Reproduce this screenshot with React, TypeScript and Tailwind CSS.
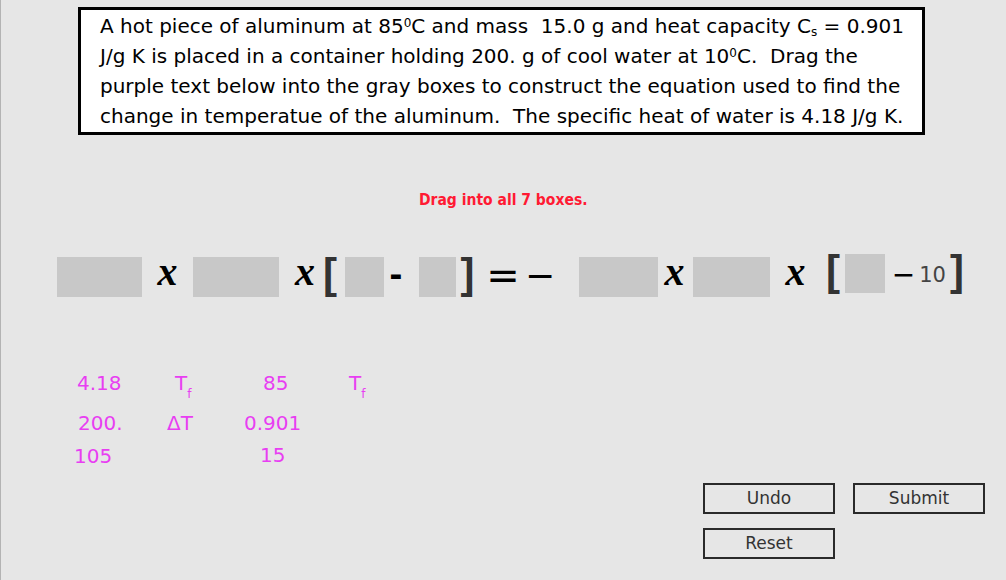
import React from "react";

function G({ cls, inner, children }: { cls: string; inner: string; children: React.ReactNode }) {
  return (
    <div className={`flex justify-center items-center shrink-0 ${cls}`}>
      <span className={`leading-none whitespace-nowrap ${inner}`}>{children}</span>
    </div>
  );
}

const X = "font-[Liberation_Serif,serif] font-bold italic text-[40px] text-black";
const BR = "font-[Liberation_Sans,sans-serif] font-bold text-[42px] text-[#333333]";

function Tf() {
  return (
    <span>
      T<sub className="text-[12px] -bottom-[8px]">f</sub>
    </span>
  );
}

function Btn({ cls, children }: { cls: string; children: React.ReactNode }) {
  return (
    <div
      className={`shrink-0 w-[132px] h-[31px] border-2 border-[#2a2a2a] flex items-center justify-center text-[17px] text-[#333333] ${cls}`}
    >
      {children}
    </div>
  );
}

export default function App() {
  return (
    <div className="w-[1006px] h-[580px] bg-[#e6e6e6] border-l border-[#b3b3b3] overflow-hidden flex flex-col font-[DejaVu_Sans,sans-serif]">
      <div className="mt-[7px] ml-[77px] w-[847px] h-[128px] shrink-0 border-[3px] border-black bg-white pl-[19px] pt-[1px] text-[20px] leading-[30px] text-black whitespace-nowrap">
        <div>
          A hot piece of aluminum at 85<sup className="text-[12px]">0</sup>C and mass{"\u00a0"} 15.0 g and heat capacity C
          <sub className="text-[12px]">s</sub> = 0.901
        </div>
        <div>
          J/g K is placed in a container holding 200. g of cool water at 10<sup className="text-[12px]">0</sup>C.{"\u00a0"} Drag the
        </div>
        <div>purple text below into the gray boxes to construct the equation used to find the</div>
        <div>change in temperatue of the aluminum.{"\u00a0"} The specific heat of water is 4.18 J/g K.</div>
      </div>

      <div className="mt-[55px] ml-[418px] h-[20px] leading-[20px] text-[15.5px] font-bold text-[#ff1a33] font-[DejaVu_Sans_Condensed,DejaVu_Sans,sans-serif] whitespace-nowrap">
        Drag into all 7 boxes.
      </div>

      <div className="mt-[44px] h-[43px] flex items-start shrink-0">
        <div className="ml-[56px] mt-[3px] w-[85px] h-[40px] bg-[#c8c8c8] shrink-0" />
        <G cls="ml-[15px] mt-[3px] w-[21px] h-[40px] pb-[10px]" inner={X}>x</G>
        <div className="ml-[15px] mt-[3px] w-[86px] h-[40px] bg-[#c8c8c8] shrink-0" />
        <G cls="ml-[16px] mt-[3px] w-[20px] h-[40px] pb-[10px]" inner={X}>x</G>
        <G cls="ml-[10px] mt-[3px] w-[10px] h-[40px] pb-[6px]" inner={BR}>[</G>
        <div className="ml-[10px] mt-[3px] w-[39px] h-[40px] bg-[#c8c8c8] shrink-0" />
        <G cls="ml-[7px] mt-[3px] w-[10px] h-[40px] pb-[5px]" inner="font-bold text-[32px] text-black">-</G>
        <div className="ml-[18px] mt-[3px] w-[37px] h-[40px] bg-[#c8c8c8] shrink-0" />
        <G cls="ml-[6px] mt-[3px] w-[11px] h-[40px] pb-[6px]" inner={BR}>]</G>
        <G cls="ml-[16px] mt-[3px] w-[28px] h-[40px] pb-[4px]" inner="text-[40px] text-black">=</G>
        <G cls="ml-[11px] mt-[3px] w-[24px] h-[40px] pb-[3px]" inner="text-[36px] text-black">{"\u2212"}</G>
        <div className="ml-[27px] mt-[3px] w-[79px] h-[40px] bg-[#c8c8c8] shrink-0" />
        <G cls="ml-[6px] mt-[3px] w-[21px] h-[40px] pb-[10px]" inner={X}>x</G>
        <div className="ml-[8px] mt-[3px] w-[77px] h-[40px] bg-[#c8c8c8] shrink-0" />
        <G cls="ml-[15px] mt-[3px] w-[21px] h-[40px] pb-[10px]" inner={X}>x</G>
        <G cls="ml-[22px] mt-[0px] w-[10px] h-[39px] pb-[6px]" inner={BR}>[</G>
        <div className="ml-[7px] mt-[0px] w-[40px] h-[39px] bg-[#c8c8c8] shrink-0" />
        <G cls="ml-[9px] mt-[3px] w-[19px] h-[40px] pb-[4px]" inner="text-[28px] text-black">{"\u2212"}</G>
        <G cls="ml-[7px] mt-[3px] w-[25px] h-[40px] pb-[4px]" inner="text-[21px] text-[#444444]">10</G>
        <G cls="ml-[7px] mt-[0px] w-[10px] h-[39px] pb-[6px]" inner={BR}>]</G>
      </div>

      <div className="mt-[74px] flex flex-col text-[20px] leading-[24px] text-[#e83ef2] whitespace-nowrap">
        <div className="flex h-[24px]">
          <div className="ml-[76px] w-[98px] shrink-0">4.18</div>
          <div className="w-[88px] shrink-0"><Tf /></div>
          <div className="w-[86px] shrink-0">85</div>
          <div className="shrink-0"><Tf /></div>
        </div>
        <div className="flex h-[24px] mt-[16px]">
          <div className="ml-[77px] w-[89px] shrink-0">200.</div>
          <div className="w-[77px] shrink-0">{"\u0394"}T</div>
          <div className="shrink-0">0.901</div>
        </div>
        <div className="flex h-[24px] mt-[9px]">
          <div className="ml-[73px] w-[186px] shrink-0">105</div>
          <div className="-mt-[1px] shrink-0">15</div>
        </div>
      </div>

      <div className="mt-[15px] flex">
        <Btn cls="ml-[702px]">Undo</Btn>
        <Btn cls="ml-[18px]">Submit</Btn>
      </div>
      <div className="mt-[14px] flex">
        <Btn cls="ml-[702px]">Reset</Btn>
      </div>
    </div>
  );
}
